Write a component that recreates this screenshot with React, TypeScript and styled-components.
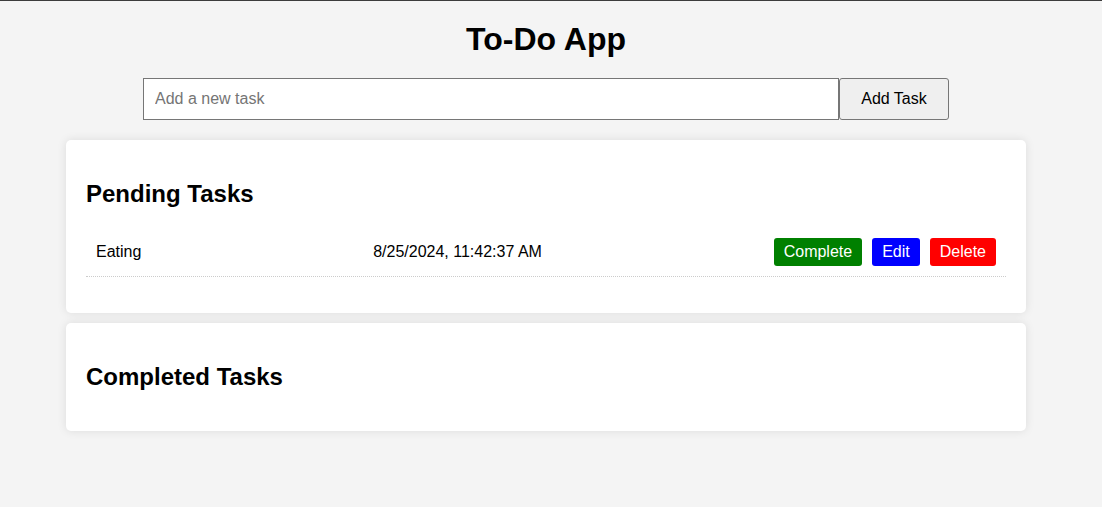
import styled, { createGlobalStyle } from "styled-components";

const GlobalStyle = createGlobalStyle`
  html, body {
    margin: 0;
    padding: 0;
    background: #f4f4f4;
  }

  body {
    border-top: 1px solid #3c3c3c;
    font-family: "Liberation Sans", Arial, sans-serif;
    color: #000;
  }
`;

const Page = styled.div`
  box-sizing: border-box;
  width: 100%;
  padding: 0 10px 20px 0;
`;

const Title = styled.h1`
  margin: 20px 0 20px;
  font-size: 32px;
  font-weight: bold;
  text-align: center;
`;

const AddForm = styled.div`
  display: flex;
  justify-content: center;
  margin-bottom: 20px;
`;

const TaskInput = styled.input`
  box-sizing: border-box;
  width: 696px;
  height: 42px;
  padding: 0 11px;

  font: 16px "Liberation Sans", Arial, sans-serif;
  color: #000;

  background: #fff;
  border: 1px solid #767676;
  border-radius: 0;
  outline: none;

  &::placeholder {
    color: #757575;
  }
`;

const AddButton = styled.button`
  box-sizing: border-box;
  width: 110px;
  height: 42px;
  padding: 0;

  font: 16px "Liberation Sans", Arial, sans-serif;
  color: #000;

  background: #efefef;
  border: 1px solid #767676;
  border-radius: 3px;
`;

const Section = styled.section`
  box-sizing: border-box;
  width: 960px;
  margin: 0 auto 10px;
  padding: 20px;

  background: #fff;
  border-radius: 5px;
  box-shadow: 0 0 10px rgba(0, 0, 0, 0.1);
`;

const SectionTitle = styled.h2`
  margin: 20px 0;
  font-size: 24px;
  font-weight: bold;
`;

const TaskList = styled.ul`
  margin: 16px 0;
  padding: 0;
  list-style: none;
`;

const TaskRow = styled.li`
  display: flex;
  align-items: center;
  justify-content: space-between;

  padding: 10px;
  border-bottom: 1px dotted #ccc;

  font-size: 16px;
`;

const Actions = styled.div`
  display: flex;
  gap: 10px;
`;

const ActionButton = styled.button<{ $color: string }>`
  padding: 5px 10px;

  font: 16px "Liberation Sans", Arial, sans-serif;
  color: #fff;

  background: ${({ $color }) => $color};
  border: none;
  border-radius: 3px;
`;

const pending = [{ id: 1, text: "Eating", createdAt: "8/25/2024, 11:42:37 AM" }];

export default function App() {
  return (
    <>
      <GlobalStyle />
      <Page>
        <Title>To-Do App</Title>
        <AddForm>
          <TaskInput placeholder="Add a new task" />
          <AddButton>Add Task</AddButton>
        </AddForm>

        <Section>
          <SectionTitle>Pending Tasks</SectionTitle>
          <TaskList>
            {pending.map((task) => (
              <TaskRow key={task.id}>
                <span>{task.text}</span>
                <span>{task.createdAt}</span>
                <Actions>
                  <ActionButton $color="#008000">Complete</ActionButton>
                  <ActionButton $color="#0000ff">Edit</ActionButton>
                  <ActionButton $color="#ff0000">Delete</ActionButton>
                </Actions>
              </TaskRow>
            ))}
          </TaskList>
        </Section>

        <Section>
          <SectionTitle>Completed Tasks</SectionTitle>
          <TaskList />
        </Section>
      </Page>
    </>
  );
}
